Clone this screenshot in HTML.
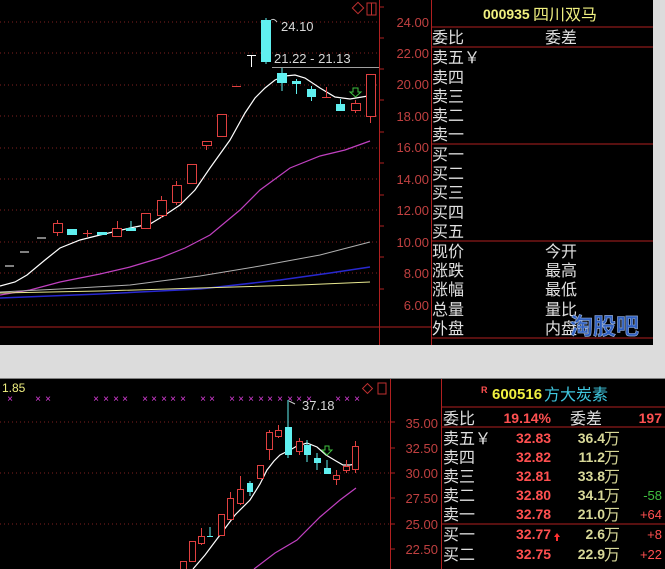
<!DOCTYPE html>
<html><head><meta charset="utf-8"><style>
html,body{margin:0;padding:0;background:#dcdcdc;width:665px;height:569px;overflow:hidden}
svg{display:block}
text{font-family:"Liberation Sans","Noto Sans CJK SC",sans-serif}
.cj{font-family:"Noto Sans CJK SC","WenQuanYi Zen Hei",sans-serif;font-size:16px;fill:#e0e0e0}
.ax{font-size:13px;fill:#c04040}
</style></head><body>
<svg width="665" height="569" viewBox="0 0 665 569" xmlns="http://www.w3.org/2000/svg">
<rect x="0" y="0" width="665" height="569" fill="#dcdcdc"/>
<!-- TOP PANEL -->
<rect x="0" y="0" width="653" height="345" fill="#000"/>
<g stroke="#802020" stroke-dasharray="1,3" stroke-width="1">
<line x1="0" y1="22" x2="379" y2="22"/><line x1="0" y1="53" x2="379" y2="53"/><line x1="0" y1="85" x2="379" y2="85"/><line x1="0" y1="116" x2="379" y2="116"/><line x1="0" y1="148" x2="379" y2="148"/><line x1="0" y1="179" x2="379" y2="179"/><line x1="0" y1="210" x2="379" y2="210"/><line x1="0" y1="242" x2="379" y2="242"/><line x1="0" y1="273" x2="379" y2="273"/><line x1="0" y1="305" x2="379" y2="305"/>
</g>
<line x1="0" y1="327" x2="379" y2="327" stroke="#b02020"/>
<line x1="379.5" y1="0" x2="379.5" y2="345" stroke="#b02020"/>
<line x1="431.5" y1="0" x2="431.5" y2="345" stroke="#b02020"/>
<g stroke="#b02020"><line x1="432" y1="27" x2="653" y2="27"/><line x1="432" y1="47" x2="653" y2="47"/><line x1="432" y1="144" x2="653" y2="144"/><line x1="432" y1="241" x2="653" y2="241"/><line x1="380" y1="327" x2="431" y2="327"/><line x1="432" y1="338" x2="653" y2="338"/></g>
<g stroke="#b02020">
<line x1="379" y1="7" x2="384" y2="7"/><line x1="379" y1="38" x2="384" y2="38"/><line x1="379" y1="69" x2="384" y2="69"/><line x1="379" y1="100" x2="384" y2="100"/><line x1="379" y1="132" x2="384" y2="132"/><line x1="379" y1="163" x2="384" y2="163"/><line x1="379" y1="195" x2="384" y2="195"/><line x1="379" y1="226" x2="384" y2="226"/><line x1="379" y1="257" x2="384" y2="257"/><line x1="379" y1="289" x2="384" y2="289"/></g>
<g class="ax" text-anchor="end">
<text x="429" y="27">24.00</text><text x="429" y="58">22.00</text><text x="429" y="89">20.00</text><text x="429" y="121">18.00</text><text x="429" y="152">16.00</text><text x="429" y="184">14.00</text><text x="429" y="215">12.00</text><text x="429" y="247">10.00</text><text x="429" y="278">8.00</text><text x="429" y="310">6.00</text>
</g>
<!-- icons -->
<rect x="354" y="4" width="8" height="8" fill="none" stroke="#c03030" transform="rotate(45 358 8)"/>
<rect x="367" y="3" width="9" height="12" fill="none" stroke="#c03030"/><line x1="371.5" y1="3" x2="371.5" y2="15" stroke="#c03030"/>
<!-- MAs -->
<polyline fill="none" stroke="#fff" stroke-width="1.2" points="0,286 15,282 27,275 45,260 60,248 80,240 100,235 130,228 150,224 165,215 180,205 195,190 210,168 230,140 245,113 255,98 265,88 275,80 285,76 295,75 305,78 320,88 335,97 350,99 362,97 368,96"/>
<polyline fill="none" stroke="#c040c0" stroke-width="1.2" points="0,295 30,290 60,282 100,274 130,267 160,258 185,248 210,235 240,210 260,190 290,168 320,156 345,150 370,141"/>
<polyline fill="none" stroke="#b0b0b0" stroke-width="1" points="0,292 60,289 130,285 200,276 260,266 320,255 370,242"/>
<polyline fill="none" stroke="#2828d0" stroke-width="1.5" points="0,298 100,294 200,289 280,280 330,273 370,267"/>
<polyline fill="none" stroke="#e8e890" stroke-width="1" points="0,293 100,291 200,288 300,285 370,282"/>
<!-- candles top -->
<g stroke-width="1">
<line x1="5" y1="266" x2="14" y2="266" stroke="#fff"/><line x1="20" y1="252" x2="29" y2="252" stroke="#fff"/><line x1="37" y1="238" x2="46" y2="238" stroke="#fff"/>
<line x1="57.5" y1="220" x2="57.5" y2="236" stroke="#e04040"/><rect x="53.5" y="223.5" width="9" height="9" fill="#000" stroke="#e04040"/>
<rect x="67" y="229" width="10" height="6" fill="#60f0f0"/>
<line x1="83" y1="233.5" x2="92" y2="233.5" stroke="#e04040"/><line x1="87.5" y1="230" x2="87.5" y2="237" stroke="#e04040"/>
<rect x="97" y="232" width="10" height="3" fill="#60f0f0"/>
<line x1="117.5" y1="221" x2="117.5" y2="236" stroke="#e04040"/><rect x="112.5" y="228.5" width="9" height="8" fill="#000" stroke="#e04040"/>
<line x1="131" y1="221" x2="131" y2="231" stroke="#60f0f0"/><rect x="126" y="228" width="10" height="3" fill="#60f0f0"/>
<rect x="141.5" y="213.5" width="9" height="15" fill="#000" stroke="#e04040"/>
<line x1="161.5" y1="196" x2="161.5" y2="218" stroke="#e04040"/><rect x="157.5" y="200.5" width="9" height="15" fill="#000" stroke="#e04040"/>
<line x1="176.5" y1="181" x2="176.5" y2="205" stroke="#e04040"/><rect x="172.5" y="185.5" width="9" height="17" fill="#000" stroke="#e04040"/>
<rect x="187.5" y="164.5" width="9" height="19" fill="#000" stroke="#e04040"/>
<line x1="206.5" y1="141" x2="206.5" y2="150" stroke="#e04040"/><rect x="202.5" y="141.5" width="9" height="4" fill="#000" stroke="#e04040"/>
<rect x="217.5" y="114.5" width="9" height="22" fill="#000" stroke="#e04040"/>
<line x1="232" y1="86.5" x2="241" y2="86.5" stroke="#e04040"/>
<line x1="247" y1="55.5" x2="256" y2="55.5" stroke="#fff"/><line x1="251.5" y1="55" x2="251.5" y2="67" stroke="#fff"/>
<line x1="266" y1="18" x2="266" y2="64" stroke="#60f0f0"/><rect x="261" y="20" width="10" height="42" fill="#60f0f0"/>
<line x1="282" y1="67" x2="282" y2="91" stroke="#60f0f0"/><rect x="277" y="73" width="10" height="10" fill="#60f0f0"/>
<line x1="296.5" y1="79" x2="296.5" y2="94" stroke="#60f0f0"/><rect x="292" y="81" width="9" height="3" fill="#60f0f0"/>
<line x1="311.5" y1="86" x2="311.5" y2="101" stroke="#60f0f0"/><rect x="307" y="89" width="9" height="8" fill="#60f0f0"/>
<line x1="322" y1="97.5" x2="331" y2="97.5" stroke="#e04040"/><line x1="326.5" y1="87" x2="326.5" y2="98" stroke="#e04040"/>
<line x1="340.5" y1="99" x2="340.5" y2="111" stroke="#60f0f0"/><rect x="336" y="104" width="9" height="7" fill="#60f0f0"/>
<line x1="355.5" y1="100" x2="355.5" y2="113" stroke="#e04040"/><rect x="351.5" y="103.5" width="9" height="7" fill="#000" stroke="#e04040"/>
<line x1="370.5" y1="114" x2="370.5" y2="123" stroke="#e04040"/><rect x="366.5" y="74.5" width="9" height="42" fill="#000" stroke="#e04040"/>
<path d="M353 88 h5 v4 h3 l-5.5 5 l-5.5 -5 h3 z" fill="none" stroke="#40c040"/>
</g>
<line x1="272" y1="67.5" x2="379" y2="67.5" stroke="#a0a0a0"/>
<path d="M271 20 q3 -2 6 2" fill="none" stroke="#ccc"/>
<text x="281" y="31" font-size="13" fill="#d8d8d8">24.10</text>
<text x="274" y="63" font-size="13" fill="#d8d8d8">21.22 - 21.13</text>
<!-- right panel top -->
<text x="483" y="19" font-size="14" font-weight="bold" fill="#f0f080">000935</text>
<text x="533" y="20" class="cj" style="fill:#f0f080">四川双马</text>
<g class="cj">
<text x="432" y="43">委比</text><text x="545" y="43">委差</text>
<text x="432" y="63">卖五￥</text><text x="432" y="83">卖四</text><text x="432" y="102">卖三</text><text x="432" y="121">卖二</text><text x="432" y="140">卖一</text>
<text x="432" y="160">买一</text><text x="432" y="179">买二</text><text x="432" y="198">买三</text><text x="432" y="218">买四</text><text x="432" y="237">买五</text>
<text x="432" y="257">现价</text><text x="545" y="257">今开</text>
<text x="432" y="276">涨跌</text><text x="545" y="276">最高</text>
<text x="432" y="295">涨幅</text><text x="545" y="295">最低</text>
<text x="432" y="315">总量</text><text x="545" y="315">量比</text>
<text x="432" y="334">外盘</text><text x="545" y="334">内盘</text>
</g>
<text x="570" y="334" font-family="Noto Sans CJK SC,sans-serif" font-size="23" font-weight="bold" fill="#3060c0" stroke="#a0b8e0" stroke-width="0.6">淘股吧</text>
<!-- BOTTOM PANEL -->
<rect x="0" y="378" width="665" height="191" fill="#000"/>
<line x1="0" y1="378.5" x2="665" y2="378.5" stroke="#808080"/>
<g stroke="#802020" stroke-dasharray="1,3"><line x1="0" y1="422" x2="390" y2="422"/><line x1="0" y1="473" x2="390" y2="473"/><line x1="0" y1="524" x2="390" y2="524"/></g>
<line x1="390.5" y1="379" x2="390.5" y2="569" stroke="#b02020"/>
<line x1="441.5" y1="379" x2="441.5" y2="569" stroke="#b02020"/>
<g stroke="#b02020"><line x1="442" y1="407" x2="665" y2="407"/><line x1="442" y1="427" x2="665" y2="427"/><line x1="442" y1="524" x2="665" y2="524"/></g>
<g stroke="#b02020"><line x1="390" y1="422" x2="395" y2="422"/><line x1="390" y1="448" x2="395" y2="448"/><line x1="390" y1="473" x2="395" y2="473"/><line x1="390" y1="498" x2="395" y2="498"/><line x1="390" y1="524" x2="395" y2="524"/><line x1="390" y1="549" x2="395" y2="549"/></g>
<g class="ax" text-anchor="end"><text x="438" y="428">35.00</text><text x="438" y="453">32.50</text><text x="438" y="478">30.00</text><text x="438" y="503">27.50</text><text x="438" y="529">25.00</text><text x="438" y="554">22.50</text></g>
<text x="2" y="392" font-size="12" fill="#f0f080">1.85</text>
<g fill="#e040e0" font-size="10" text-anchor="middle">
<text x="10" y="402">×</text><text x="38" y="402">×</text><text x="48" y="402">×</text><text x="96" y="402">×</text><text x="106" y="402">×</text><text x="116" y="402">×</text><text x="125" y="402">×</text><text x="145" y="402">×</text><text x="154" y="402">×</text><text x="164" y="402">×</text><text x="173" y="402">×</text><text x="183" y="402">×</text><text x="203" y="402">×</text><text x="212" y="402">×</text><text x="232" y="402">×</text><text x="241" y="402">×</text><text x="251" y="402">×</text><text x="261" y="402">×</text><text x="270" y="402">×</text><text x="280" y="402">×</text><text x="290" y="402">×</text><text x="299" y="402">×</text><text x="309" y="402">×</text><text x="338" y="402">×</text><text x="347" y="402">×</text><text x="357" y="402">×</text>
</g>
<rect x="364" y="385" width="7" height="7" fill="none" stroke="#c03030" transform="rotate(45 367.5 388.5)"/>
<rect x="378" y="383" width="8" height="11" fill="none" stroke="#c03030"/>
<polyline fill="none" stroke="#fff" stroke-width="1.2" points="193,569 205,555 220,535 235,515 250,500 260,484 267,470 274,461 280,455 290,450 297,446 307,443 317,447 326,455 336,461 343,465 350,465 356,464"/>
<polyline fill="none" stroke="#c040c0" stroke-width="1.2" points="254,569 275,553 297,540 320,517 340,500 356,488"/>
<g>
<rect x="180.5" y="561.5" width="6" height="8" fill="#000" stroke="#e04040"/>
<rect x="189.5" y="541.5" width="6" height="20" fill="#000" stroke="#e04040"/>
<line x1="201.5" y1="528" x2="201.5" y2="545" stroke="#e04040"/><rect x="198.5" y="536.5" width="6" height="7" fill="#000" stroke="#e04040"/>
<line x1="210" y1="527" x2="210" y2="537" stroke="#60f0f0"/><line x1="207" y1="536.5" x2="213" y2="536.5" stroke="#60f0f0"/>
<rect x="218.5" y="514.5" width="6" height="21" fill="#000" stroke="#e04040"/>
<line x1="230.5" y1="492" x2="230.5" y2="520" stroke="#e04040"/><rect x="227.5" y="498.5" width="6" height="21" fill="#000" stroke="#e04040"/>
<line x1="240.5" y1="476" x2="240.5" y2="505" stroke="#e04040"/><rect x="237.5" y="489.5" width="6" height="14" fill="#000" stroke="#e04040"/>
<line x1="250" y1="481" x2="250" y2="496" stroke="#60f0f0"/><rect x="247" y="483" width="6" height="9" fill="#60f0f0"/>
<rect x="257.5" y="465.5" width="6" height="13" fill="#000" stroke="#e04040"/>
<line x1="269.5" y1="430" x2="269.5" y2="460" stroke="#e04040"/><rect x="266.5" y="432.5" width="6" height="17" fill="#000" stroke="#e04040"/>
<line x1="278.5" y1="425" x2="278.5" y2="438" stroke="#e04040"/><rect x="275.5" y="430.5" width="6" height="6" fill="#000" stroke="#e04040"/>
<line x1="288" y1="400" x2="288" y2="458" stroke="#60f0f0"/><rect x="285" y="427" width="7" height="28" fill="#60f0f0"/>
<line x1="299.5" y1="438" x2="299.5" y2="455" stroke="#e04040"/><rect x="296.5" y="441.5" width="6" height="10" fill="#000" stroke="#e04040"/>
<line x1="307" y1="440" x2="307" y2="462" stroke="#60f0f0"/><rect x="304" y="445" width="7" height="10" fill="#60f0f0"/>
<line x1="317" y1="453" x2="317" y2="470" stroke="#60f0f0"/><rect x="314" y="458" width="7" height="5" fill="#60f0f0"/>
<line x1="327" y1="460" x2="327" y2="474" stroke="#60f0f0"/><rect x="324" y="468" width="7" height="6" fill="#60f0f0"/>
<line x1="336.5" y1="470" x2="336.5" y2="485" stroke="#e04040"/><rect x="333.5" y="475.5" width="6" height="4" fill="#000" stroke="#e04040"/>
<line x1="346.5" y1="460" x2="346.5" y2="473" stroke="#e04040"/><rect x="343.5" y="466.5" width="6" height="4" fill="#000" stroke="#e04040"/>
<line x1="355.5" y1="441" x2="355.5" y2="473" stroke="#e04040"/><rect x="352.5" y="446.5" width="6" height="23" fill="#000" stroke="#e04040"/>
<path d="M325 446 h4 v4 h3 l-5 5 l-5 -5 h3 z" fill="none" stroke="#40c040"/>
</g>
<path d="M289 401 l6 3" stroke="#ccc"/>
<text x="302" y="410" font-size="13" fill="#d8d8d8">37.18</text>
<!-- right panel bottom -->
<text x="481" y="393" font-size="9" font-weight="bold" fill="#ff5050">R</text>
<text x="492" y="399" font-size="15" font-weight="bold" fill="#f0f040">600516</text>
<text x="544" y="400" class="cj" style="fill:#40c8e0">方大炭素</text>
<g class="cj">
<text x="443" y="424">委比</text><text x="570" y="424">委差</text>
<text x="443" y="444">卖五￥</text><text x="443" y="463">卖四</text><text x="443" y="482">卖三</text><text x="443" y="501">卖二</text><text x="443" y="520">卖一</text>
<text x="443" y="540">买一</text><text x="443" y="560">买二</text>
</g>
<g font-size="14" font-weight="bold" fill="#ff5050">
<text x="551" y="423" text-anchor="end">19.14%</text><text x="662" y="423" text-anchor="end">197</text>
<text x="516" y="443">32.83</text><text x="516" y="462">32.82</text><text x="516" y="481">32.81</text><text x="516" y="500">32.80</text><text x="516" y="519">32.78</text><text x="516" y="539">32.77</text><text x="516" y="559">32.75</text>
</g>
<path d="M557 533 l-3 4 h2 v4 h2 v-4 h2 z" fill="#ff3030"/>
<g font-size="14" font-weight="bold" fill="#d8d898" text-anchor="end">
<text x="605" y="443">36.4</text><text x="605" y="462">11.2</text><text x="605" y="481">33.8</text><text x="605" y="500">34.1</text><text x="605" y="519">21.0</text><text x="605" y="539">2.6</text><text x="605" y="559">22.9</text>
</g>
<g class="cj" style="fill:#d8d898"><text x="604" y="444">万</text><text x="604" y="463">万</text><text x="604" y="482">万</text><text x="604" y="501">万</text><text x="604" y="520">万</text><text x="604" y="540">万</text><text x="604" y="560">万</text></g>
<g font-size="13" text-anchor="end"><text x="662" y="500" fill="#40c040">-58</text><text x="662" y="519" fill="#ff5050">+64</text><text x="662" y="539" fill="#ff5050">+8</text><text x="662" y="559" fill="#ff5050">+22</text></g>
</svg>
</body></html>
